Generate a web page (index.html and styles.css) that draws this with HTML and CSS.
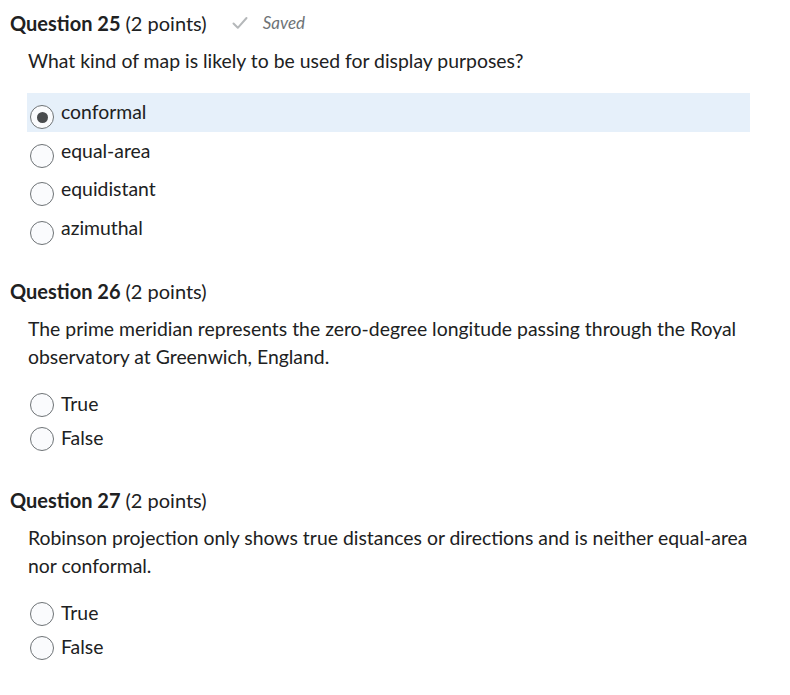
FILE: index.html
```html
<!DOCTYPE html>
<html lang="en">
<head>
<meta charset="utf-8">
<title>Quiz</title>
<link rel="stylesheet" href="styles.css">
</head>
<body>
<main class="quiz">
  <section class="question">
    <h2 class="q-head"><span class="q-title">Question 25</span> (2 points)<span class="saved"><svg class="check" viewBox="0 0 16 14" width="16" height="14" aria-hidden="true"><path d="M1.5 7.5 L5.8 11.8 L14.5 2" fill="none" stroke="#b5b8ba" stroke-width="2" stroke-linecap="round" stroke-linejoin="round"/></svg><em>Saved</em></span></h2>
    <div class="q-body">
      <p class="q-text">What kind of map is likely to be used for display purposes?</p>
      <div class="options options-mc">
        <label class="option selected"><span class="radio checked"></span><span class="label">conformal</span></label>
        <label class="option"><span class="radio"></span><span class="label">equal-area</span></label>
        <label class="option"><span class="radio"></span><span class="label">equidistant</span></label>
        <label class="option"><span class="radio"></span><span class="label">azimuthal</span></label>
      </div>
    </div>
  </section>

  <section class="question">
    <h2 class="q-head"><span class="q-title">Question 26</span> (2 points)</h2>
    <div class="q-body">
      <p class="q-text">The prime meridian represents the zero-degree longitude passing through the Royal observatory at Greenwich, England.</p>
      <div class="options options-tf">
        <label class="option"><span class="radio"></span><span class="label">True</span></label>
        <label class="option"><span class="radio"></span><span class="label">False</span></label>
      </div>
    </div>
  </section>

  <section class="question">
    <h2 class="q-head"><span class="q-title">Question 27</span> (2 points)</h2>
    <div class="q-body">
      <p class="q-text">Robinson projection only shows true distances or directions and is neither equal-area nor conformal.</p>
      <div class="options options-tf">
        <label class="option"><span class="radio"></span><span class="label">True</span></label>
        <label class="option"><span class="radio"></span><span class="label">False</span></label>
      </div>
    </div>
  </section>
</main>
</body>
</html>
```

FILE: styles.css
```css
* { box-sizing: border-box; }

html, body {
  margin: 0;
  padding: 0;
  background: #ffffff;
}

body {
  font-family: Lato, "Noto Sans", sans-serif;
  font-size: 19.4px;
  color: #202122;
}

.quiz {
  padding: 9px 0 0 10px;
  width: 750px;
  display: flex;
  flex-direction: column;
  gap: 30px;
}

.q-head {
  margin: 0;
  font-size: 20px;
  line-height: 28px;
  font-weight: 400;
  display: flex;
  align-items: center;
}

.q-title {
  font-weight: 700;
  margin-right: 5px;
}

.saved {
  display: inline-flex;
  align-items: center;
  margin-left: 25px;
  color: #6e7376;
  font-size: 17px;
}

.saved .check {
  margin-right: 15px;
}

.saved em {
  font-style: italic;
}

.q-body {
  padding-left: 18px;
  margin-top: 10px;
}

.q-text {
  margin: 0;
  line-height: 28px;
  max-width: 722px;
}

.options {
  display: flex;
  flex-direction: column;
}

.options-mc {
  margin-top: 18px;
  margin-left: -1px;
}

.options-tf {
  margin-top: 17px;
}

.option {
  display: flex;
  align-items: center;
  gap: 7px;
  padding-left: 3px;
}

.options-mc .option {
  height: 38.5px;
  padding-top: 10px;
}

.options-mc .label {
  top: -5px;
}

.options-tf .option {
  height: 34px;
  padding-left: 2px;
}

.options-tf .label {
  top: -1px;
}

.option.selected {
  background: #e6f0fa;
}

.radio {
  width: 24px;
  height: 24px;
  border-radius: 50%;
  border: 1.5px solid #6e7376;
  background: #fafbfd;
  flex: none;
  display: flex;
  align-items: center;
  justify-content: center;
}

.radio.checked::after {
  content: "";
  width: 11px;
  height: 11px;
  border-radius: 50%;
  background: #494c4e;
}

.label {
  line-height: 24px;
  position: relative;
}
```
